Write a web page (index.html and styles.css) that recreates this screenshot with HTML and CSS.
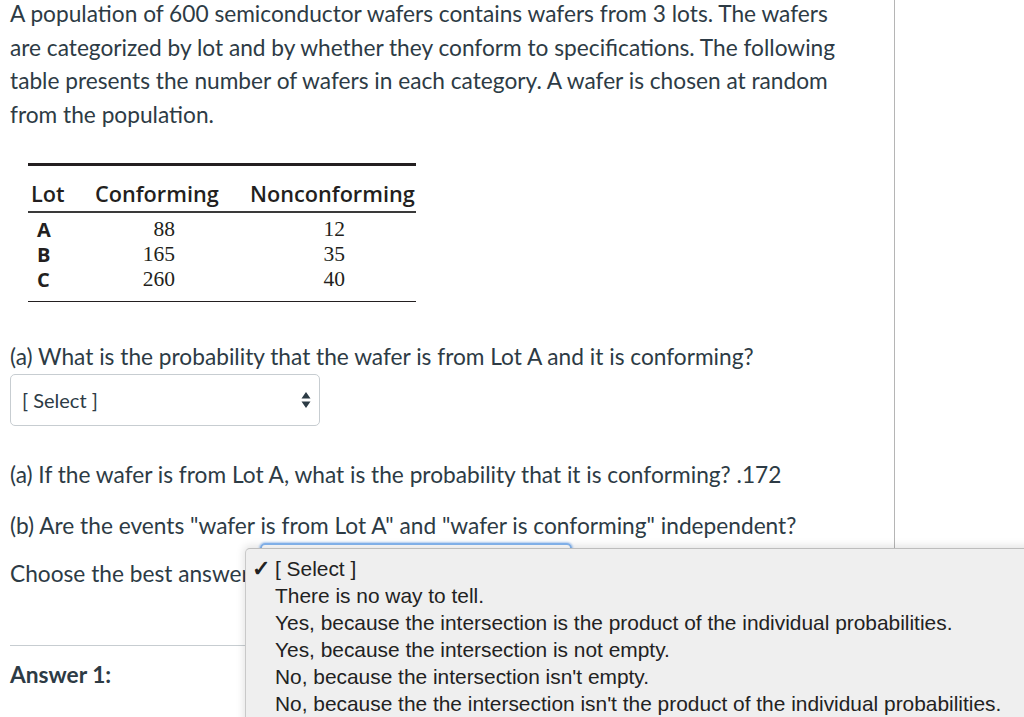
FILE: index.html
```html
<!DOCTYPE html>
<html>
<head>
<meta charset="utf-8">
<link rel="stylesheet" href="styles.css">
</head>
<body>
<div class="page">
  <div class="content">
    <p class="intro">A population of 600 semiconductor wafers contains wafers from 3 lots. The wafers are categorized by lot and by whether they conform to specifications. The following table presents the number of wafers in each category. A wafer is chosen at random from the population.</p>

    <table class="data">
      <thead>
        <tr><th class="lot">Lot</th><th class="conf">Conforming</th><th class="non">Nonconforming</th></tr>
      </thead>
      <tbody>
        <tr class="first"><td class="lot">A</td><td class="conf"><span class="num">88</span></td><td class="non"><span class="num">12</span></td></tr>
        <tr><td class="lot">B</td><td class="conf"><span class="num">165</span></td><td class="non"><span class="num">35</span></td></tr>
        <tr class="last"><td class="lot">C</td><td class="conf"><span class="num">260</span></td><td class="non"><span class="num">40</span></td></tr>
      </tbody>
    </table>

    <p class="q q1">(a) What is the probability that the wafer is from Lot A and it is conforming?</p>
    <div class="select">
      <span>[ Select ]</span>
      <svg class="arrows" width="10" height="18" viewBox="0 0 10 18"><path d="M5 1 L9.5 7.5 L0.5 7.5 Z M0.5 10.5 L9.5 10.5 L5 17 Z" fill="#2d3b45"/></svg>
    </div>

    <p class="q q2">(a) If the wafer is from Lot A, what is the probability that it is conforming? .172</p>
    <p class="q q3">(b) Are the events "wafer is from Lot A" and "wafer is conforming" independent?</p>
    <div class="choose">
      <span>Choose the best answer</span>
      <div class="select2"></div>
    </div>
    <hr class="rule">
    <p class="answer">Answer 1:</p>
  </div>
  <div class="sidebar"></div>
</div>

<ul class="menu">
  <li class="checked"><span class="check">✓</span>[ Select ]</li>
  <li>There is no way to tell.</li>
  <li>Yes, because the intersection is the product of the individual probabilities.</li>
  <li>Yes, because the intersection is not empty.</li>
  <li>No, because the intersection isn't empty.</li>
  <li>No, because the the intersection isn't the product of the individual probabilities.</li>
</ul>
</body>
</html>
```
FILE: styles.css
```css
html, body {
  margin: 0;
  padding: 0;
  background: #fff;
  overflow: hidden;
}
body {
  width: 1024px;
  height: 717px;
  position: relative;
  font-family: Lato, "Open Sans", sans-serif;
  color: #2d3b45;
}
.page {
  display: flex;
  height: 717px;
}
.content {
  width: 884px;
  padding-left: 10px;
  border-right: 1px solid #b5b5b5;
  margin-top: -3px;
}
.sidebar {
  flex: 1;
}
.intro {
  margin: 0;
  font-size: 22.7px;
  line-height: 33.7px;
  width: 845px;
}
.data {
  border-collapse: collapse;
  margin: 31px 0 0 18px;
  font-family: "Open Sans", Lato, sans-serif;
  color: #231f20;
  width: 388px;
}
.data thead tr {
  border-top: 3px solid #231f20;
  border-bottom: 2px solid #3a3a3a;
}
.data th {
  font-weight: 600;
  font-size: 21.7px;
  padding: 15px 0 4px;
  text-align: left;
  line-height: 26px;
  white-space: nowrap;
}
.data th.lot { width: 64px; padding-left: 3px; }
.data th.conf { width: 155px; }
.data td {
  height: 25px;
  line-height: 25px;
  padding: 0;
  vertical-align: middle;
}
.data td.lot {
  font-weight: 700;
  padding-left: 9px;
  font-size: 20px;
}
.data .num {
  font-family: "Liberation Serif", serif;
  font-size: 21.5px;
  line-height: 25px;
  display: inline-block;
  vertical-align: top;
  text-align: right;
}
.data td.conf .num { width: 80px; }
.data td.non .num { width: 95px; }
.data tr.first td { padding-top: 4px; }
.data tr.last td { padding-bottom: 9px; }
.data tbody tr.last { border-bottom: 1.5px solid #231f20; }

.q {
  margin: 0;
  font-size: 22.7px;
  line-height: 30px;
  white-space: nowrap;
}
.q1 { margin-top: 40px; }
.select {
  margin-top: 2px;
  border: 1px solid #c7cdd1;
  border-radius: 5px;
  display: flex;
  align-items: center;
  justify-content: space-between;
  padding: 0 8px 0 11px;
  box-sizing: border-box;
  width: 310px;
  height: 52px;
  font-size: 20px;
}
.q2 { margin-top: 34px; }
.q3 { margin-top: 21px; }
.choose {
  margin-top: 18px;
  font-size: 22.7px;
  line-height: 30px;
  position: relative;
}
.select2 {
  position: absolute;
  left: 250px;
  top: -16px;
  width: 312px;
  height: 52px;
  border: 2px solid #85b6f1;
  border-radius: 5px;
  box-sizing: border-box;
  box-shadow: 0 0 2px 1px #b3d0f5;
}
.rule {
  border: 0;
  border-top: 1px solid #c7cdd1;
  margin: 56px 0 0 0;
  width: 640px;
}
.answer {
  margin: 14px 0 0 0;
  font-weight: 700;
  font-size: 22.7px;
  line-height: 30px;
}
.menu {
  position: absolute;
  left: 245px;
  top: 548px;
  width: 800px;
  height: 200px;
  margin: 0;
  padding: 6px 0 0 0;
  list-style: none;
  background: #efefef;
  border-top: 1px solid #bdbdbd;
  border-left: 1px solid #c9c9c9;
  border-top-left-radius: 5px;
  box-shadow: -1px -2px 8px rgba(0, 0, 0, 0.12);
  font-family: "Liberation Sans", Arial, sans-serif;
  font-size: 20.9px;
  color: #222;
}
.menu li {
  line-height: 27px;
  padding-left: 29px;
  position: relative;
  white-space: nowrap;
}
.menu .check {
  position: absolute;
  left: 6px;
  font-size: 22px;
  font-weight: 700;
}
```
